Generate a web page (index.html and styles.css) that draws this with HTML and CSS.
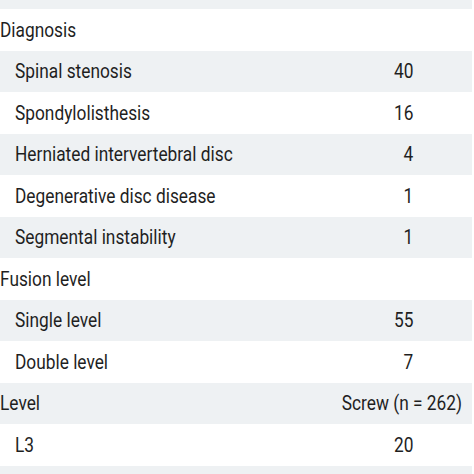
FILE: index.html
```html
<!DOCTYPE html>
<html>
<head>
<meta charset="utf-8">
<link rel="stylesheet" href="styles.css">
</head>
<body>
<div class="table">
  <div class="row stripe cut"></div>
  <div class="row"><span class="label">Diagnosis</span></div>
  <div class="row stripe"><span class="label sub">Spinal stenosis</span><span class="num">40</span></div>
  <div class="row"><span class="label sub">Spondylolisthesis</span><span class="num">16</span></div>
  <div class="row stripe"><span class="label sub">Herniated intervertebral disc</span><span class="num">4</span></div>
  <div class="row"><span class="label sub">Degenerative disc disease</span><span class="num">1</span></div>
  <div class="row stripe"><span class="label sub">Segmental instability</span><span class="num">1</span></div>
  <div class="row"><span class="label">Fusion level</span></div>
  <div class="row stripe"><span class="label sub">Single level</span><span class="num">55</span></div>
  <div class="row"><span class="label sub">Double level</span><span class="num">7</span></div>
  <div class="row stripe"><span class="label">Level</span><span class="num head">Screw (n = 262)</span></div>
  <div class="row"><span class="label sub">L3</span><span class="num">20</span></div>
  <div class="row stripe"></div>
</div>
</body>
</html>
```
FILE: styles.css
```css
html, body {
  margin: 0;
  padding: 0;
  background: #ffffff;
}
body {
  font-family: Roboto, "Liberation Sans", sans-serif;
  font-size: 20px;
  color: #1f1f1f;
  width: 474px;
  height: 474px;
  overflow: hidden;
}
.table {
  width: 472px;
  height: 474px;
  display: flex;
  flex-direction: column;
  overflow: hidden;
}
.row {
  height: 41.5px;
  display: flex;
  align-items: center;
  justify-content: space-between;
  flex-shrink: 0;
}
.row.cut {
  height: 9px;
}
.stripe {
  background: #eef1f3;
}
.label,
.num {
  display: inline-block;
  white-space: nowrap;
  transform: scaleX(0.865);
}
.label {
  transform-origin: left center;
}
.label.sub {
  margin-left: 15px;
}
.num {
  transform-origin: right center;
  margin-right: 59px;
}
.num.head {
  margin-right: 10px;
}
```
